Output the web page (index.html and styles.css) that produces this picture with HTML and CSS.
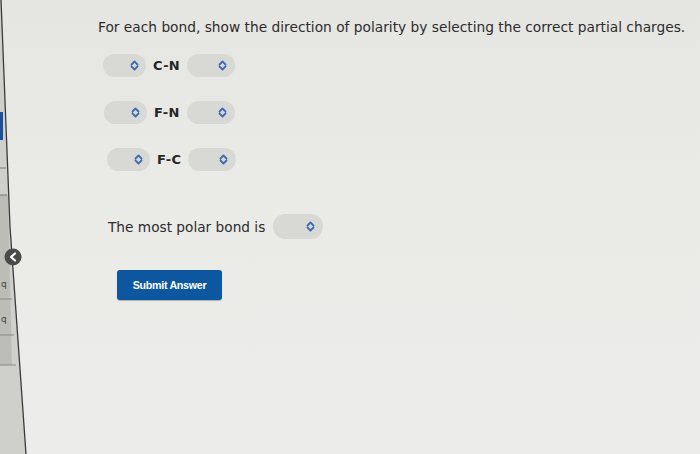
FILE: index.html
```html
<!DOCTYPE html>
<html>
<head>
<meta charset="utf-8">
<link rel="stylesheet" href="styles.css">
</head>
<body>
<svg class="edge" width="40" height="454" viewBox="0 0 40 454">
  <polygon points="0,0 1,0 10,227 26,454 0,454" fill="#cfcfcb"/>
  <polygon points="0,195 8,195 12,365 0,365" fill="#bdbdb8"/>
  <rect x="0" y="112" width="3" height="28" fill="#1d4f9a"/>
  <line x1="0" y1="168" x2="6" y2="168" stroke="#777" stroke-width="1"/>
  <line x1="0" y1="195" x2="7" y2="195" stroke="#777" stroke-width="1"/>
  <line x1="0" y1="299" x2="12" y2="299" stroke="#888" stroke-width="1"/>
  <line x1="0" y1="335" x2="14" y2="335" stroke="#888" stroke-width="1"/>
  <line x1="0" y1="365" x2="16" y2="365" stroke="#888" stroke-width="1"/>
  <polyline points="1,0 10,227 26,454" fill="none" stroke="#3a3a3a" stroke-width="1.3"/>
  <text x="1" y="287" font-family="DejaVu Sans" font-size="9" fill="#444">q</text>
  <text x="1" y="322" font-family="DejaVu Sans" font-size="9" fill="#444">q</text>
  <circle cx="13" cy="257" r="8.5" fill="#4a4a4a"/>
  <polyline points="15,253.5 11,257 15,260.5" fill="none" stroke="#fff" stroke-width="2.2" stroke-linecap="round" stroke-linejoin="round"/>
</svg>

<main class="content">
  <p class="prompt">For each bond, show the direction of polarity by selecting the correct partial charges.</p>

  <div class="bonds">
    <div class="bond b1">
      <span class="sel left"><svg class="chev" viewBox="0 0 9 11"><path d="M1.5 4.5 L4.5 1.5 L7.5 4.5 M1.5 6.5 L4.5 9.5 L7.5 6.5"/></svg></span>
      <span class="label">C-N</span>
      <span class="sel right"><svg class="chev" viewBox="0 0 9 11"><path d="M1.5 4.5 L4.5 1.5 L7.5 4.5 M1.5 6.5 L4.5 9.5 L7.5 6.5"/></svg></span>
    </div>
    <div class="bond b2">
      <span class="sel left"><svg class="chev" viewBox="0 0 9 11"><path d="M1.5 4.5 L4.5 1.5 L7.5 4.5 M1.5 6.5 L4.5 9.5 L7.5 6.5"/></svg></span>
      <span class="label">F-N</span>
      <span class="sel right"><svg class="chev" viewBox="0 0 9 11"><path d="M1.5 4.5 L4.5 1.5 L7.5 4.5 M1.5 6.5 L4.5 9.5 L7.5 6.5"/></svg></span>
    </div>
    <div class="bond b3">
      <span class="sel left"><svg class="chev" viewBox="0 0 9 11"><path d="M1.5 4.5 L4.5 1.5 L7.5 4.5 M1.5 6.5 L4.5 9.5 L7.5 6.5"/></svg></span>
      <span class="label">F-C</span>
      <span class="sel right"><svg class="chev" viewBox="0 0 9 11"><path d="M1.5 4.5 L4.5 1.5 L7.5 4.5 M1.5 6.5 L4.5 9.5 L7.5 6.5"/></svg></span>
    </div>
  </div>

  <div class="polar">
    <span class="polar-text">The most polar bond is</span>
    <span class="sel wide"><svg class="chev" viewBox="0 0 9 11"><path d="M1.5 4.5 L4.5 1.5 L7.5 4.5 M1.5 6.5 L4.5 9.5 L7.5 6.5"/></svg></span>
  </div>

  <button class="submit">Submit Answer</button>
</main>
</body>
</html>
```

FILE: styles.css
```css
html, body {
  margin: 0;
  padding: 0;
  width: 700px;
  height: 454px;
  overflow: hidden;
}
body {
  background: linear-gradient(180deg, #e5e5e2 0%, #eaeae7 40%, #ececea 100%);
  font-family: "DejaVu Sans", Verdana, sans-serif;
  color: #2a2a2a;
  position: relative;
}
.edge {
  position: absolute;
  left: 0;
  top: 0;
}
.content {
  padding: 16px 0 0 98px;
}
.prompt {
  margin: 0;
  font-size: 13.75px;
  line-height: 22px;
  color: #2c2c2c;
}
.bonds {
  margin-top: 16px;
  display: flex;
  flex-direction: column;
  gap: 24px;
}
.bond {
  display: flex;
  align-items: center;
  height: 23px;
}
.b1 { padding-left: 5px; }
.b2 { padding-left: 6px; }
.b3 { padding-left: 9px; }
.sel {
  display: flex;
  align-items: center;
  justify-content: flex-end;
  height: 23px;
  background: #d8d8d5;
  border-radius: 12px;
  box-sizing: border-box;
  padding-right: 7px;
}
.sel.left { width: 43px; }
.sel.right { width: 48px; padding-right: 8px; margin-left: 1px; }
.label {
  font-weight: bold;
  font-size: 13px;
  color: #262626;
  margin: 0 6px 0 7px;
  letter-spacing: 0.3px;
}
.chev {
  width: 9px;
  height: 11px;
  display: block;
  fill: none;
  stroke: #3f6db5;
  stroke-width: 1.8;
  stroke-linecap: round;
  stroke-linejoin: round;
}
.polar {
  margin-top: 43px;
  padding-left: 10px;
  display: flex;
  align-items: center;
  gap: 8px;
}
.polar-text {
  font-size: 13.7px;
  color: #2c2c2c;
}
.sel.wide {
  width: 50px;
  height: 25px;
  padding-right: 8px;
}
.submit {
  display: block;
  margin: 31px 0 0 19px;
  width: 105px;
  height: 30px;
  border: none;
  border-radius: 3px;
  background: #0d56a0;
  color: #fff;
  font-family: "Liberation Sans", Arial, sans-serif;
  font-weight: bold;
  font-size: 10.7px;
  letter-spacing: -0.3px;
  padding: 0;
  box-shadow: 0 1px 1px rgba(0,0,0,0.25);
}
```
